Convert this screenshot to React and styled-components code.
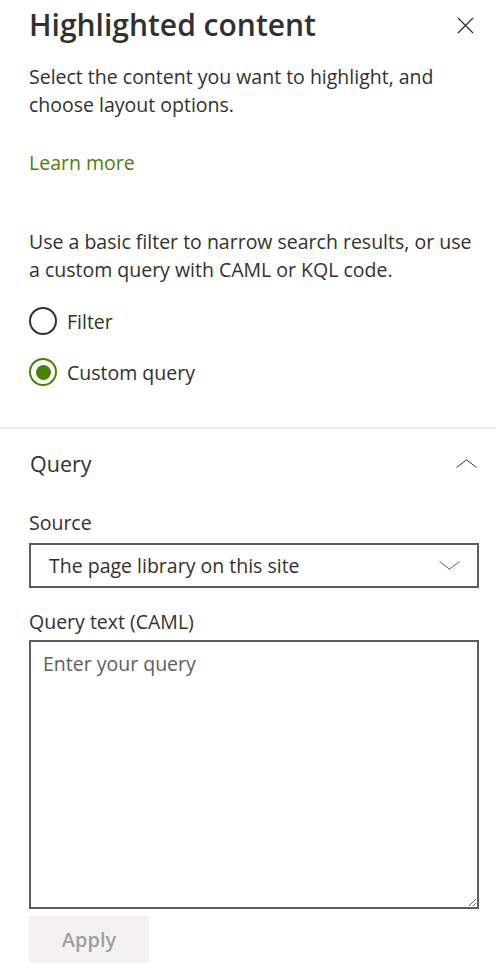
import React, { useState } from "react";
import styled, { createGlobalStyle } from "styled-components";

const Global = createGlobalStyle`
    body {
        margin: 0;
        background: #ffffff;
        font-family: "Open Sans", "Noto Sans", sans-serif;
        color: #323130;
    }
`

const Panel = styled.div`
    width: 496px;
    display: flex;
    flex-direction: column;
`

const Header = styled.div`
    display: flex;
    align-items: center;
    justify-content: space-between;
    padding: 5px 22px 0 29px;
    height: 40px;
`

const Title = styled.h1`
    margin: 0;
    font-size: 30px;
    font-weight: 600;
    line-height: 40px;
    color: #323130;
`

const IconButton = styled.button`
    border: none;
    background: none;
    padding: 0;
    display: flex;
    cursor: pointer;
`

const Section = styled.div`
    padding: 0 18px 0 29px;
    display: flex;
    flex-direction: column;
`

const Text = styled.p`
    margin: ${(props) => props.top || 0}px 0 0;
    font-size: 19.5px;
    line-height: 28px;
    color: #323130;
`

const LearnLink = styled.a`
    margin-top: 30px;
    font-size: 19.5px;
    line-height: 28px;
    color: #498205;
    text-decoration: none;
`

const RadioRow = styled.label`
    display: flex;
    align-items: center;
    gap: 10px;
    height: 28px;
    margin-top: 23px;
    font-size: 19.5px;
    cursor: pointer;
`

const RadioCircle = styled.span`
    width: 28px;
    height: 28px;
    box-sizing: border-box;
    border-radius: 50%;
    border: 2px solid ${(props) => (props.checked ? "#498205" : "#323130")};
    display: flex;
    align-items: center;
    justify-content: center;

    &::after {
        content: "";
        width: 15px;
        height: 15px;
        border-radius: 50%;
        background: #498205;
        display: ${(props) => (props.checked ? "block" : "none")};
    }
`

const Divider = styled.div`
    margin-top: 41px;
    height: 2px;
    background: #edebe9;
`

const GroupHeader = styled.div`
    display: flex;
    align-items: center;
    justify-content: space-between;
    margin-top: 19px;
    height: 30px;
    padding: 0 19px 0 30px;
    font-size: 21.5px;
`

const Label = styled.div`
    margin-top: ${(props) => props.top}px;
    font-size: 19.5px;
    line-height: 28px;
`

const Dropdown = styled.div`
    margin-top: 6px;
    height: 45px;
    box-sizing: border-box;
    border: 2px solid #605e5c;
    display: flex;
    align-items: center;
    justify-content: space-between;
    padding: 0 17px 0 18px;
    font-size: 19.5px;
    width: 450px;
`

const QueryBox = styled.textarea`
    margin-top: 4px;
    width: 450px;
    height: 269px;
    box-sizing: border-box;
    border: 2px solid #605e5c;
    border-radius: 0;
    padding: 8px 12px;
    font-family: "Open Sans", "Noto Sans", sans-serif;
    font-size: 19.5px;
    line-height: 28px;
    color: #323130;
    resize: both;
    outline: none;

    &::placeholder {
        color: #605e5c;
    }
`

const ApplyButton = styled.button`
    margin-top: 7px;
    width: 120px;
    height: 47px;
    border: none;
    background: #f3f2f1;
    color: #a19f9d;
    font-family: "Open Sans", "Noto Sans", sans-serif;
    font-size: 20px;
    font-weight: 600;
`

function App() {
    const [mode, setMode] = useState("custom")

    return (
        <Panel>
            <Global />
            <Header>
                <Title>Highlighted content</Title>
                <IconButton aria-label="Close">
                    <svg width="17" height="17" viewBox="0 0 17 17">
                        <path d="M1 1 L16 16 M16 1 L1 16" stroke="#323130" strokeWidth="1.3" fill="none" />
                    </svg>
                </IconButton>
            </Header>
            <Section>
                <Text top={18}>
                    Select the content you want to highlight, and choose layout options.
                </Text>
                <LearnLink href="#">Learn more</LearnLink>
                <Text top={51}>
                    Use a basic filter to narrow search results, or use a custom query with CAML or KQL code.
                </Text>
                <RadioRow onClick={() => setMode("filter")}>
                    <RadioCircle checked={mode === "filter"} />
                    Filter
                </RadioRow>
                <RadioRow onClick={() => setMode("custom")}>
                    <RadioCircle checked={mode === "custom"} />
                    Custom query
                </RadioRow>
            </Section>
            <Divider />
            <GroupHeader>
                Query
                <svg width="21" height="9" viewBox="0 0 21 9">
                    <path d="M0.5 8.5 L10.5 0.8 L20.5 8.5" stroke="#323130" strokeWidth="1" fill="none" />
                </svg>
            </GroupHeader>
            <Section>
                <Label top={31}>Source</Label>
                <Dropdown>
                    The page library on this site
                    <svg width="21" height="9" viewBox="0 0 21 9">
                        <path d="M0.5 0.5 L10.5 8.2 L20.5 0.5" stroke="#605e5c" strokeWidth="1" fill="none" />
                    </svg>
                </Dropdown>
                <Label top={20}>Query text (CAML)</Label>
                <QueryBox placeholder="Enter your query" />
                <ApplyButton disabled>Apply</ApplyButton>
            </Section>
        </Panel>
    )
}

export default App
